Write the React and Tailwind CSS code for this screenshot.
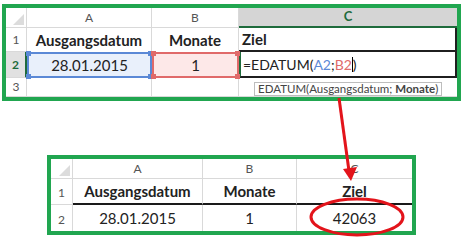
import React from 'react';

const grid = 'border-r border-b border-[#d9d9d9]';

const Corner = () => (
  <div className={`${grid} relative bg-white`}>
    <svg className="absolute right-[2px] bottom-[2px]" width="11" height="11" viewBox="0 0 11 11">
      <polygon points="11,0 11,11 0,11" fill="#dcdcdc" />
    </svg>
  </div>
);

const Handles = ({ color }) => (
  <>
    <span className={`absolute -left-[3px] -top-[3px] w-[5px] h-[5px] ${color}`} />
    <span className={`absolute -right-[3px] -top-[3px] w-[5px] h-[5px] ${color}`} />
    <span className={`absolute -left-[3px] -bottom-[3px] w-[5px] h-[5px] ${color}`} />
    <span className={`absolute -right-[3px] -bottom-[3px] w-[5px] h-[5px] ${color}`} />
  </>
);

const TopSheet = () => (
  <div className="ml-[2px] mt-[4px] w-[459px] h-[97px] border-4 border-[#21a650] relative">
    <div className="grid grid-cols-[21px_125px_87px_1fr] grid-rows-[20px_24px_26px_1fr] h-full text-[#222]">
      <Corner />
      <div className={`${grid} flex items-center justify-center text-[12px] text-[#555]`}>A</div>
      <div className={`${grid} flex items-center justify-center text-[12px] text-[#555]`}>B</div>
      <div className="flex items-center justify-center text-[13px] font-bold text-[#1e6b3c] bg-[#d5d5d5] border-b-2 border-[#1e6b3c]">C</div>

      <div className={`${grid} flex items-center justify-center text-[12px] text-[#555]`}>1</div>
      <div className="border-r border-[#d9d9d9] flex items-center justify-center text-[15px] font-bold">Ausgangsdatum</div>
      <div className="border-r border-[#d9d9d9] flex items-center justify-center text-[15px] font-bold">Monate</div>
      <div className="border-b-2 border-r-2 border-[#1f1f1f] flex items-center pl-[3px] text-[15px] font-bold">Ziel</div>

      <div className="border-b border-r-2 border-[#d9d9d9] border-r-[#1e6b3c] bg-[#e1e1e1] flex items-center justify-center text-[12px] font-bold text-[#1e6b3c]">2</div>
      <div className="relative border-2 border-[#5b89d6] bg-[#e9f0fb] flex items-center justify-center text-[15px]">
        28.01.2015
        <Handles color="bg-[#5b89d6]" />
      </div>
      <div className="relative border-2 border-[#e06a6a] bg-[#fde8e8] flex items-center justify-center text-[15px]">
        1
        <Handles color="bg-[#e06a6a]" />
      </div>
      <div className="border-b-2 border-r-2 border-l-2 border-[#1f1f1f] border-l-[#1e6b3c] flex items-center pl-[2px] text-[14px]">
        <span>=EDATUM(</span>
        <span className="text-[#5b89d6]">A2</span>
        <span>;</span>
        <span className="text-[#e06a6a]">B2</span>
        <span className="inline-block w-[1px] h-[15px] bg-black" />
        <span>)</span>
      </div>

      <div className={`${grid} flex items-end justify-center text-[12px] text-[#555]`}>3</div>
      <div className={grid} />
      <div className={grid} />
      <div className="border-b border-[#d9d9d9]" />
    </div>
    <div className="absolute left-[248px] top-[74px] h-[14px] px-[3px] flex items-center bg-white border border-[#bdbdbd] text-[11.5px] text-[#444] leading-none">
      EDATUM(Ausgangsdatum;&nbsp;<span className="font-bold">Monate</span>)
    </div>
  </div>
);

const BottomSheet = () => (
  <div className="ml-[47px] mt-[54px] w-[369px] h-[80px] border-4 border-[#21a650]">
    <div className="grid grid-cols-[22px_130px_94px_1fr] grid-rows-[20px_26px_1fr] h-full text-[#222]">
      <Corner />
      <div className={`${grid} flex items-center justify-center text-[12px] text-[#555]`}>A</div>
      <div className={`${grid} flex items-center justify-center text-[12px] text-[#555]`}>B</div>
      <div className="border-b border-[#d9d9d9] flex items-center justify-center text-[12px] text-[#555]">C</div>

      <div className="border-r border-b border-[#d9d9d9] flex items-end justify-center pb-[2px] text-[12px] text-[#555]">1</div>
      <div className="border-r border-[#d9d9d9] border-b-2 border-b-[#1a1a1a] flex items-center justify-center text-[15px] font-bold">Ausgangsdatum</div>
      <div className="border-r border-[#d9d9d9] border-b-2 border-b-[#1a1a1a] flex items-center justify-center text-[15px] font-bold">Monate</div>
      <div className="border-b-2 border-[#1a1a1a] flex items-center justify-center text-[15px] font-bold">Ziel</div>

      <div className="border-r border-[#d9d9d9] flex items-end justify-center pb-[2px] text-[12px] text-[#555]">2</div>
      <div className="border-r border-[#d9d9d9] flex items-center justify-center text-[15px]">28.01.2015</div>
      <div className="border-r border-[#d9d9d9] flex items-center justify-center text-[15px]">1</div>
      <div className="flex items-center justify-center text-[15px]">42063</div>
    </div>
  </div>
);

export default function App() {
  return (
    <div className="relative w-[464px] h-[241px] bg-white overflow-hidden" style={{ fontFamily: 'Lato, "Open Sans", sans-serif' }}>
      <TopSheet />
      <BottomSheet />
      <svg className="absolute left-0 top-0 pointer-events-none" width="464" height="241" viewBox="0 0 464 241">
        <line x1="339" y1="98" x2="349" y2="171" stroke="#e3141b" strokeWidth="3" />
        <polygon points="343,169 357,167 351,181" fill="#e3141b" />
        <ellipse cx="357" cy="217" rx="46" ry="18" fill="none" stroke="#e3141b" strokeWidth="3" />
      </svg>
    </div>
  );
}
